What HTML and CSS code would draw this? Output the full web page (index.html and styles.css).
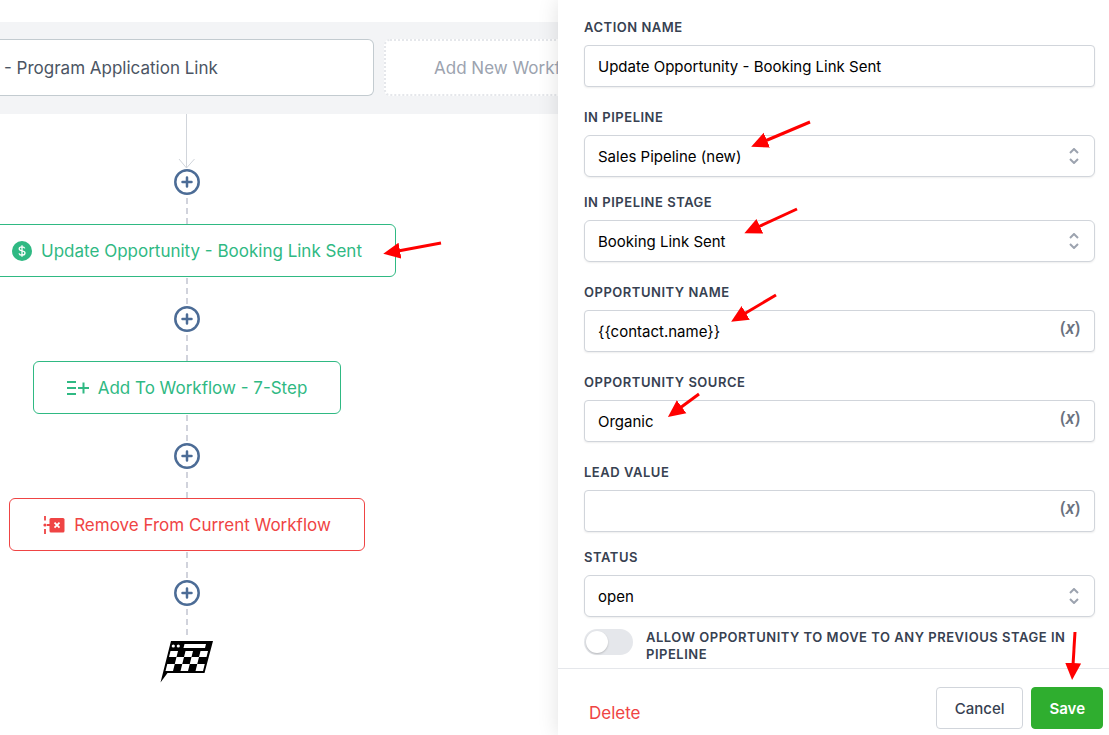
FILE: index.html
```html
<!DOCTYPE html>
<html lang="en">
<head>
    <meta charset="UTF-8">
    <meta name="viewport" content="width=device-width, initial-scale=1.0">
    <title>Workflow Builder</title>
    <link rel="stylesheet" href="styles.css">
</head>
<body>
    <main class="canvas">
        <div class="tabs">
            <button type="button" class="tab tab-current">- Program Application Link</button>
            <button type="button" class="tab tab-new">Add New Workflow Trigger</button>
        </div>

        <div class="steps">
            <svg class="start-line" width="18" height="55" viewBox="0 0 18 55" fill="none" stroke="#d1d5db">
                <path d="M8.500 0V54M1 45l7.500 9 8-9"/>
            </svg>
            <button type="button" class="plus" aria-label="Add step">
                <svg width="26" height="26" viewBox="0 0 26 26" fill="none" stroke="#4c6c96" stroke-width="2.500">
                    <circle cx="13" cy="13" r="11.700"/>
                    <path d="M13 8.500v9M8.500 13h9" stroke-linecap="round"/>
                </svg>
            </button>
            <div class="line"></div>

            <div class="step-wrap">
                <button type="button" class="step step-green">
                    <svg width="20" height="20" viewBox="0 0 20 20">
                        <circle cx="10" cy="10" r="10" fill="#2fb983"/>
                        <path d="M12.800 7.400C12.400 6.300 11.300 5.800 10 5.800c-1.600 0-2.800.7-2.800 2s1.200 1.800 2.800 2.100 3 .8 3 2.200-1.300 2.100-3 2.100c-1.500 0-2.700-.6-3-1.800M10 4.200v11.600" fill="none" stroke="#fff" stroke-width="1.300"/>
                    </svg>
                    Update Opportunity - Booking Link Sent
                </button>
                <svg class="arrow arrow-step" width="60" height="28"><line x1="58" y1="5" x2="15" y2="13"/></svg>
            </div>

            <div class="line"></div>
            <button type="button" class="plus" aria-label="Add step">
                <svg width="26" height="26" viewBox="0 0 26 26" fill="none" stroke="#4c6c96" stroke-width="2.500">
                    <circle cx="13" cy="13" r="11.700"/>
                    <path d="M13 8.500v9M8.500 13h9" stroke-linecap="round"/>
                </svg>
            </button>
            <div class="line"></div>

            <button type="button" class="step step-green">
                <svg width="22" height="16" viewBox="0 0 22 16" fill="none" stroke="#2fb983" stroke-width="2">
                    <path d="M0 2h9M0 8h9M0 14h9M11 8h11M16.500 2.500v11"/>
                </svg>
                Add To Workflow - 7-Step
            </button>

            <div class="line"></div>
            <button type="button" class="plus" aria-label="Add step">
                <svg width="26" height="26" viewBox="0 0 26 26" fill="none" stroke="#4c6c96" stroke-width="2.500">
                    <circle cx="13" cy="13" r="11.700"/>
                    <path d="M13 8.500v9M8.500 13h9" stroke-linecap="round"/>
                </svg>
            </button>
            <div class="line"></div>

            <button type="button" class="step step-red">
                <svg width="22" height="20" viewBox="0 0 22 20" fill="none" stroke="#ef4444" stroke-width="1.800">
                    <path d="M2 1v4.500M2 14v5M4 10h4"/>
                    <circle cx="2" cy="10" r="1.600" fill="#ef4444" stroke="none"/>
                    <rect x="6.500" y="3" width="15" height="14.500" rx="1.500" fill="#ef4444" stroke="none"/>
                    <path d="M11.500 7.700l5 5M16.500 7.700l-5 5" stroke="#fff"/>
                </svg>
                Remove From Current Workflow
            </button>

            <div class="line"></div>
            <button type="button" class="plus" aria-label="Add step">
                <svg width="26" height="26" viewBox="0 0 26 26" fill="none" stroke="#4c6c96" stroke-width="2.500">
                    <circle cx="13" cy="13" r="11.700"/>
                    <path d="M13 8.500v9M8.500 13h9" stroke-linecap="round"/>
                </svg>
            </button>
            <div class="line"></div>

            <!-- finish flag -->
            <svg class="flag" width="54" height="42" viewBox="0 0 54 42">
                <path d="M11 0H53L44.500 32H7.500L.5 41.500z"/>
                <g fill="#fff">
                    <circle cx="13.300" cy="5" r="1.600"/>
                    <circle cx="18.300" cy="5" r="1.600"/>
                    <path d="M24.500 3H46l-1 4H23.500z"/>
                    <g transform="skewX(-14)">
                        <path d="M13 10h7.500v6H13zM28 10h7.500v6H28zM43 10h7.500v6H43z"/>
                        <path d="M20.500 16H28v7h-7.500zM35.500 16H43v7h-7.500z"/>
                        <path d="M13 23h7.500v7H13zM28 23h7.500v7H28zM43 23h7.500v7H43z"/>
                    </g>
                </g>
            </svg>
        </div>
    </main>

    <form class="panel">
        <div class="panel-body">
            <div class="field">
                <label for="actionName">Action Name</label>
                <div class="control">
                    <input type="text" id="actionName" value="Update Opportunity - Booking Link Sent">
                </div>
            </div>

            <div class="field field-tight">
                <label for="pipeline">In Pipeline</label>
                <div class="control">
                    <select id="pipeline"><option>Sales Pipeline (new)</option></select>
                    <svg class="chevrons" width="10" height="16" viewBox="0 0 10 16"><path d="M1 5l4-4 4 4M1 11l4 4 4-4"/></svg>
                </div>
                <svg class="arrow arrow-pipeline" width="62" height="38"><line x1="60" y1="7" x2="15" y2="26"/></svg>
            </div>

            <div class="field">
                <label for="stage">In Pipeline Stage</label>
                <div class="control">
                    <select id="stage"><option>Booking Link Sent</option></select>
                    <svg class="chevrons" width="10" height="16" viewBox="0 0 10 16"><path d="M1 5l4-4 4 4M1 11l4 4 4-4"/></svg>
                </div>
                <svg class="arrow arrow-stage" width="56" height="34"><line x1="53" y1="4" x2="14" y2="22"/></svg>
            </div>

            <div class="field">
                <label for="oppName">Opportunity Name</label>
                <div class="control">
                    <input type="text" id="oppName" value="{{contact.name}}">
                    <button type="button" class="variable">(<i>x</i>)</button>
                </div>
                <svg class="arrow arrow-name" width="50" height="36"><line x1="46" y1="5" x2="14" y2="24"/></svg>
            </div>

            <div class="field">
                <label for="oppSource">Opportunity Source</label>
                <div class="control">
                    <input type="text" id="oppSource" value="Organic">
                    <button type="button" class="variable">(<i>x</i>)</button>
                </div>
                <svg class="arrow arrow-source" width="36" height="32"><line x1="32" y1="4" x2="13" y2="18"/></svg>
            </div>

            <div class="field field-tight">
                <label for="leadValue">Lead Value</label>
                <div class="control">
                    <input type="text" id="leadValue">
                    <button type="button" class="variable">(<i>x</i>)</button>
                </div>
            </div>

            <div class="field field-last">
                <label for="status">Status</label>
                <div class="control">
                    <select id="status"><option>open</option></select>
                    <svg class="chevrons" width="10" height="16" viewBox="0 0 10 16"><path d="M1 5l4-4 4 4M1 11l4 4 4-4"/></svg>
                </div>
            </div>

            <div class="toggle-row">
                <input type="checkbox" class="toggle" id="allowMove">
                <label for="allowMove">Allow opportunity to move to any previous stage in pipeline</label>
            </div>
        </div>

        <div class="panel-footer">
            <button type="button" class="btn-delete">Delete</button>
            <div class="actions">
                <button type="button" class="btn btn-cancel">Cancel</button>
                <button type="submit" class="btn btn-save">Save</button>
                <svg class="arrow arrow-save" width="22" height="54"><line x1="13" y1="4" x2="11" y2="37"/></svg>
            </div>
        </div>
    </form>

    <!-- shared arrow head -->
    <svg class="defs" width="0" height="0">
        <marker id="head" markerUnits="userSpaceOnUse" markerWidth="18" markerHeight="18" refX="2" refY="9" orient="auto" viewBox="0 0 18 18">
            <path d="M0 1l17 8-17 8z" fill="#ff0000"/>
        </marker>
    </svg>
</body>
</html>
```
FILE: styles.css
```css
* {
    box-sizing: border-box;
}

body {
    margin: 0;
    min-height: 100vh;
    display: flex;
    background-color: #fff;
    font-family: Inter, "Liberation Sans", sans-serif;
    color: #374151;
}

button,
input,
select {
    font-family: inherit;
    margin: 0;
}

button {
    padding: 0;
    background: none;
    border: none;
    cursor: pointer;
}

svg {
    display: block;
    flex-shrink: 0;
}

/* left side */
.canvas {
    flex: 1;
    min-width: 0;
    overflow: hidden;
    padding-top: 22px;
}

.tabs {
    display: flex;
    gap: 10px;
    padding: 17px 0 18px;
    background-color: #f3f4f6;
}

.tab {
    flex-shrink: 0;
    height: 57px;
    background-color: #fff;
    font-size: 17px;
    text-align: left;
    white-space: nowrap;
}

.tab-current {
    width: 374px;
    padding-left: 4px;
    border: 1px solid #c3cbd0;
    border-left: none;
    border-radius: 0 6px 6px 0;
    color: #4b5563;
}

.tab-new {
    padding: 0 48px;
    border: 2px dotted #e5e7eb;
    border-radius: 6px;
    color: #9ca3af;
}

.steps {
    width: 374px;
    display: flex;
    flex-direction: column;
    align-items: center;
}

.line {
    width: 2px;
    height: 29px;
    background: repeating-linear-gradient(to bottom, #d1d3dc 1px 7px, transparent 7px 11px);
}

.plus + .line {
    background: repeating-linear-gradient(to bottom, #d1d3dc 3px 9px, transparent 9px 13px);
}

.step-wrap {
    position: relative;
}

.step {
    display: flex;
    align-items: center;
    gap: 9px;
    height: 53px;
    padding: 0 33px;
    border: 1px solid;
    border-radius: 6px;
    background-color: #fff;
    font-size: 17px;
    white-space: nowrap;
}

.step-green {
    border-color: #2fb983;
    color: #2fb983;
}

.step-red {
    border-color: #ef4444;
    color: #ef4444;
}

.flag {
    margin-top: 6px;
}

/* right side */
.panel {
    position: relative;
    width: 551px;
    max-width: 100%;
    display: flex;
    flex-direction: column;
    background-color: #fff;
    box-shadow: 0 0 20px rgba(0, 0, 0, 0.12);
}

.panel-body {
    flex: 1;
    padding: 19px 14px 0 26px;
}

.field {
    position: relative;
    margin-bottom: 22px;
}

.field-tight {
    margin-bottom: 17px;
}

.field-last {
    margin-bottom: 12px;
}

label {
    display: block;
    font-size: 13px;
    font-weight: 600;
    line-height: 17px;
    letter-spacing: 0.04em;
    text-transform: uppercase;
}

.control {
    position: relative;
    margin-top: 9px;
}

.control input,
.control select {
    display: block;
    width: 100%;
    height: 42px;
    padding: 0 44px 0 13px;
    border: 1px solid #d1d5db;
    border-radius: 4px;
    background-color: #fff;
    box-shadow: 0 1px 2px rgba(0, 0, 0, 0.07);
    font-size: 15px;
    color: #000;
}

.control select {
    appearance: none;
    border-radius: 6px;
}

.chevrons {
    position: absolute;
    top: 13px;
    right: 16px;
    fill: none;
    stroke: #9ca3af;
    stroke-width: 2;
    pointer-events: none;
}

.variable {
    position: absolute;
    top: 8px;
    right: 15px;
    font-family: "Noto Sans", sans-serif;
    font-size: 17px;
    font-weight: 600;
    line-height: 20px;
    color: #6b7280;
}

.toggle-row {
    display: flex;
    gap: 13px;
}

.toggle {
    appearance: none;
    flex-shrink: 0;
    width: 49px;
    height: 26px;
    padding: 2px;
    border-radius: 13px;
    background-color: #e5e7eb;
    cursor: pointer;
}

.toggle::before {
    content: "";
    display: block;
    width: 22px;
    height: 22px;
    border-radius: 50%;
    background-color: #fff;
    box-shadow: 0 1px 2px rgba(0, 0, 0, 0.2);
}

.toggle:checked {
    background-color: #2fae2f;
}

.toggle:checked::before {
    margin-left: 23px;
}

.panel-footer {
    display: flex;
    align-items: center;
    justify-content: space-between;
    padding: 18px 6px 6px 31px;
    border-top: 1px solid #e5e7eb;
}

.btn-delete {
    margin-top: 10px;
    font-size: 17px;
    color: #ef4444;
}

.actions {
    position: relative;
    display: flex;
    gap: 8px;
}

.btn {
    height: 42px;
    padding: 0 18px;
    border: 1px solid #d1d5db;
    border-radius: 4px;
    font-size: 15px;
    font-weight: 500;
    color: #374151;
}

.btn-save {
    padding: 0 17px;
    border-color: #2fae2f;
    background-color: #2fae2f;
    font-weight: 600;
    color: #fff;
}

/* red pointers */
.arrow {
    position: absolute;
    overflow: visible;
    pointer-events: none;
}

.arrow line {
    stroke: #ff0000;
    stroke-width: 3;
    marker-end: url(#head);
}

.arrow-step {
    top: 14px;
    right: -47px;
}

.arrow-pipeline {
    top: 6px;
    left: 166px;
}

.arrow-stage {
    top: 11px;
    left: 160px;
}

.arrow-name {
    top: 6px;
    left: 146px;
}

.arrow-source {
    top: 16px;
    left: 83px;
}

.arrow-save {
    top: -59px;
    right: 19px;
}

.defs {
    position: absolute;
}
```
